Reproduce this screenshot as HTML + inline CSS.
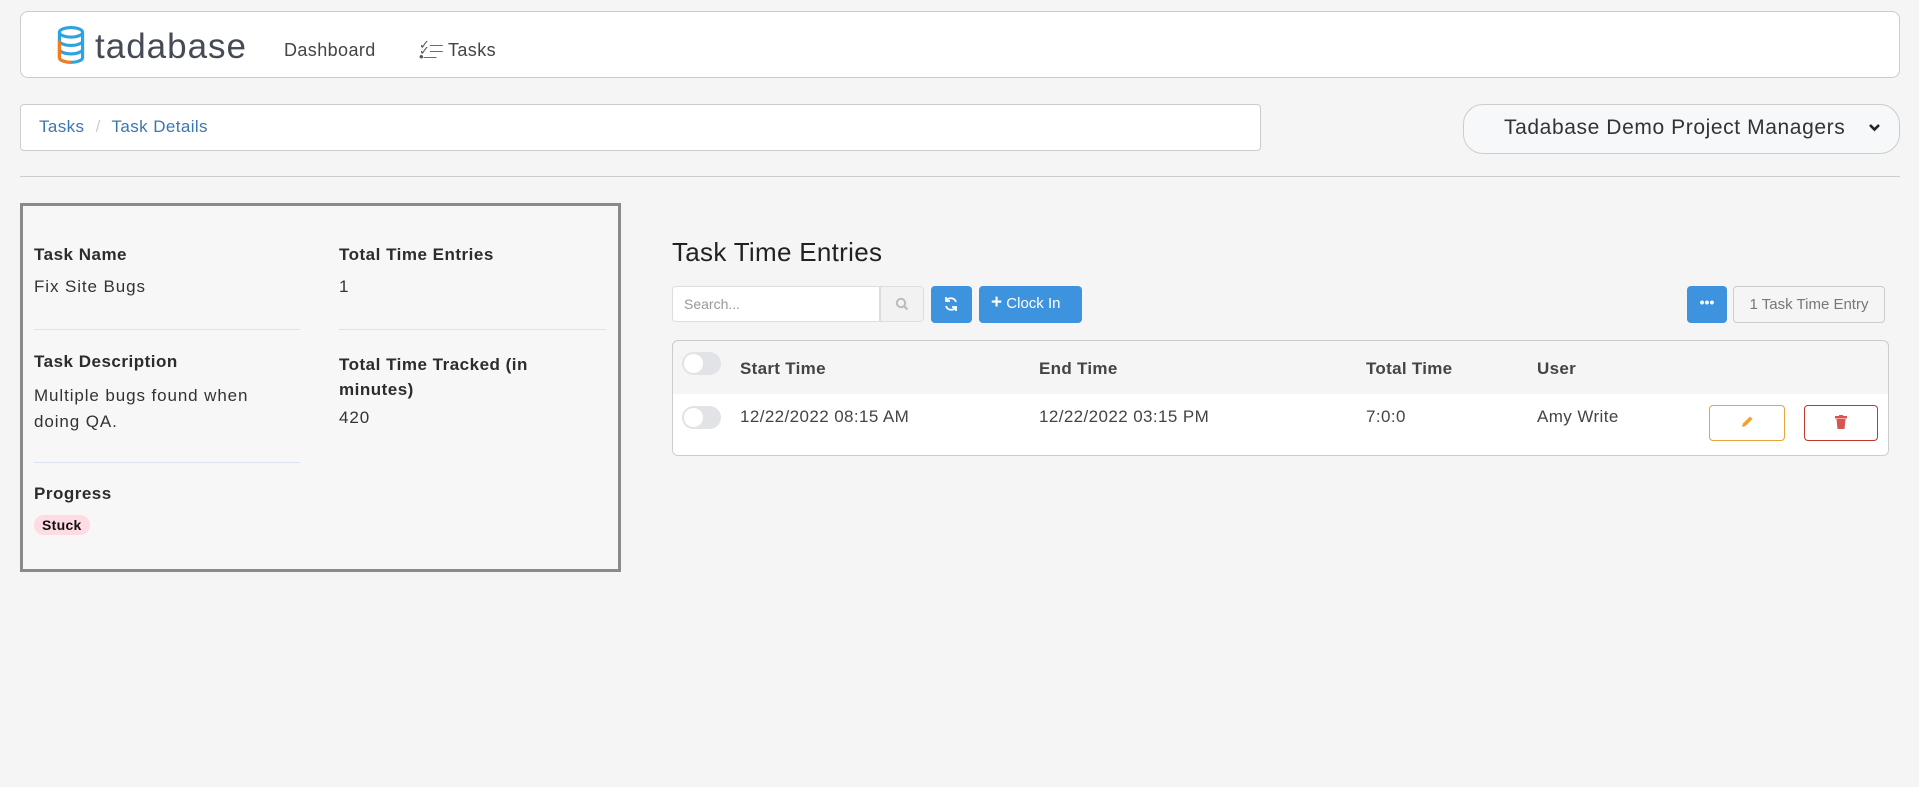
<!DOCTYPE html>
<html><head><meta charset="utf-8"><style>
*{box-sizing:border-box;margin:0;padding:0}
body{width:1919px;height:787px;background:#f5f5f5;font-family:"Liberation Sans",sans-serif;color:#333;position:relative;overflow:hidden}
.abs{position:absolute}
.hdr{left:20px;top:11px;width:1880px;height:67px;background:#fff;border:1px solid #ccc;border-radius:8px}
.bc{left:20px;top:104px;width:1241px;height:47px;background:#fff;border:1px solid #ccc;border-radius:4px}
.dd{left:1463px;top:104px;width:437px;height:50px;background:#f7f8fa;border:1px solid #ccc;border-radius:20px}
.panel{left:20px;top:203px;width:601px;height:369px;border:3px solid #8a8a8a;background:#f7f7f7}
.lbl{font-size:17px;font-weight:bold;color:#2c2c2c;letter-spacing:0.5px}
.val{font-size:17px;color:#333;letter-spacing:0.9px}
.ln{height:1px;background:#dde3ee}
.btn{background:#3d93dd;border-radius:4px;color:#fff;font-size:15px}
.th{font-size:17px;font-weight:bold;color:#444;top:359px;letter-spacing:0.3px}
.td{font-size:17px;color:#444;top:407px;letter-spacing:0.4px}
.tog{width:39px;height:23px;border-radius:12px;background:#e2e3e6}
.tog:after{content:"";position:absolute;left:2px;top:2px;width:19px;height:19px;border-radius:50%;background:#fff}
</style></head><body>
<div class="abs hdr"></div>
<svg class="abs" style="left:56px;top:26px" width="30" height="40" viewBox="0 0 28 38">
<ellipse cx="14" cy="6" rx="11" ry="4.5" fill="none" stroke="#2ea3e0" stroke-width="3"/>
<path d="M3 6v24c0 2.5 5 4.5 11 4.5s11-2 11-4.5V6" fill="none" stroke="#2ea3e0" stroke-width="3"/>
<path d="M3 14c0 2.5 5 4.5 11 4.5s11-2 11-4.5M3 22c0 2.5 5 4.5 11 4.5s11-2 11-4.5" fill="none" stroke="#2ea3e0" stroke-width="3"/>
<path d="M3 14v16c0 2.5 5 4.5 11 4.5" fill="none" stroke="#f47a20" stroke-width="3"/>
</svg>
<div class="abs" style="left:95px;top:27px;font-size:35px;color:#454b55;letter-spacing:1px">tadabase</div>
<div class="abs" style="left:284px;top:40px;font-size:18px;color:#444;letter-spacing:0.4px">Dashboard</div>
<div class="abs" style="left:419px;top:42px;font-size:13px;color:#555;line-height:6px">✓—<br>✓—<br>•—</div>
<div class="abs" style="left:448px;top:40px;font-size:18px;color:#444;letter-spacing:0.4px">Tasks</div>
<div class="abs bc"></div>
<div class="abs" style="left:39px;top:117px;font-size:17px;color:#3a76b5;letter-spacing:0.4px">Tasks <span style="color:#ccc;margin:0 6px">/</span> Task Details</div>
<div class="abs dd"></div>
<div class="abs" style="left:1504px;top:116px;font-size:21px;color:#333;letter-spacing:0.6px">Tadabase Demo Project Managers</div>
<svg class="abs" style="left:1868px;top:123px" width="13" height="9" viewBox="0 0 13 9"><path d="M2 2l4.5 4.5L11 2" fill="none" stroke="#222" stroke-width="2.6"/></svg>
<div class="abs" style="left:20px;top:176px;width:1880px;height:1px;background:#ccc"></div>
<div class="abs panel"></div>
<div class="abs lbl" style="left:34px;top:245px">Task Name</div>
<div class="abs val" style="left:34px;top:277px">Fix Site Bugs</div>
<div class="abs ln" style="left:34px;top:329px;width:266px"></div>
<div class="abs lbl" style="left:34px;top:352px">Task Description</div>
<div class="abs val" style="left:34px;top:383px;line-height:26px">Multiple bugs found when<br>doing QA.</div>
<div class="abs ln" style="left:34px;top:462px;width:266px"></div>
<div class="abs lbl" style="left:34px;top:484px">Progress</div>
<div class="abs" style="left:34px;top:515px;padding:2px 8px;background:#ffdbe3;border-radius:11px;font-size:14px;font-weight:bold;color:#111;letter-spacing:0.3px">Stuck</div>
<div class="abs lbl" style="left:339px;top:245px">Total Time Entries</div>
<div class="abs val" style="left:339px;top:277px">1</div>
<div class="abs ln" style="left:339px;top:329px;width:267px"></div>
<div class="abs lbl" style="left:339px;top:352px;line-height:25px">Total Time Tracked (in<br>minutes)</div>
<div class="abs val" style="left:339px;top:408px">420</div>

<div class="abs" style="left:672px;top:237px;font-size:26px;color:#222;letter-spacing:0.3px">Task Time Entries</div>
<div class="abs" style="left:672px;top:286px;width:208px;height:36px;background:#fff;border:1px solid #ddd;border-radius:4px 0 0 4px"></div>
<div class="abs" style="left:684px;top:296px;font-size:14px;color:#999">Search...</div>
<div class="abs" style="left:880px;top:286px;width:44px;height:36px;background:#f2f2f2;border:1px solid #ddd;border-radius:0 4px 4px 0"></div>
<svg class="abs" style="left:895px;top:297px" width="14" height="14" viewBox="0 0 14 14"><circle cx="6" cy="6" r="4.2" fill="none" stroke="#bbb" stroke-width="2"/><path d="M9 9l3.5 3.5" stroke="#bbb" stroke-width="2.2"/></svg>
<div class="abs btn" style="left:931px;top:286px;width:41px;height:37px"></div>
<svg class="abs" style="left:943px;top:296px" width="16" height="16" viewBox="0 0 16 16"><path d="M13 6A5.5 5.5 0 0 0 3 5M3 10a5.5 5.5 0 0 0 10 1" fill="none" stroke="#fff" stroke-width="1.8"/><path d="M3 1v4h4M13 15v-4H9" fill="none" stroke="#fff" stroke-width="1.8"/></svg>
<div class="abs btn" style="left:979px;top:286px;width:103px;height:37px;padding:9px 0 0 12px;font-size:15px"><b style="font-size:19px;line-height:14px">+</b> Clock In</div>
<div class="abs btn" style="left:1687px;top:286px;width:40px;height:37px;text-align:center;font-size:14px;line-height:32px;font-weight:bold">•••</div>
<div class="abs" style="left:1733px;top:286px;width:152px;height:37px;border:1px solid #ccc;border-radius:4px;background:#f5f5f5;font-size:15px;color:#777;text-align:center;line-height:35px">1 Task Time Entry</div>

<div class="abs" style="left:672px;top:340px;width:1217px;height:116px;border:1px solid #ccc;border-radius:6px;background:#f5f5f5;overflow:hidden"><div style="position:absolute;left:0;top:53px;width:100%;height:63px;background:#fff"></div></div>
<div class="abs tog" style="left:682px;top:352px"></div>
<div class="abs th" style="left:740px">Start Time</div>
<div class="abs th" style="left:1039px">End Time</div>
<div class="abs th" style="left:1366px">Total Time</div>
<div class="abs th" style="left:1537px">User</div>
<div class="abs tog" style="left:682px;top:406px"></div>
<div class="abs td" style="left:740px">12/22/2022 08:15 AM</div>
<div class="abs td" style="left:1039px">12/22/2022 03:15 PM</div>
<div class="abs td" style="left:1366px">7:0:0</div>
<div class="abs td" style="left:1537px">Amy Write</div>
<div class="abs" style="left:1709px;top:405px;width:76px;height:36px;border:1px solid #e8a33d;border-radius:4px;background:#fff"></div>
<svg class="abs" style="left:1740px;top:415px" width="14" height="14" viewBox="0 0 14 14"><path d="M2 12l1-3.5L10 1.5l2.5 2.5L5.5 11z" fill="#f0a02e"/></svg>
<div class="abs" style="left:1804px;top:405px;width:74px;height:36px;border:1px solid #c0392b;border-radius:4px;background:#fff"></div>
<svg class="abs" style="left:1835px;top:415px" width="12" height="14" viewBox="0 0 12 14"><rect x="0" y="1" width="12" height="2.5" fill="#d9534f"/><rect x="4" y="0" width="4" height="2" fill="#d9534f"/><path d="M1.5 4h9l-1 10h-7z" fill="#d9534f"/></svg>
</body></html>
